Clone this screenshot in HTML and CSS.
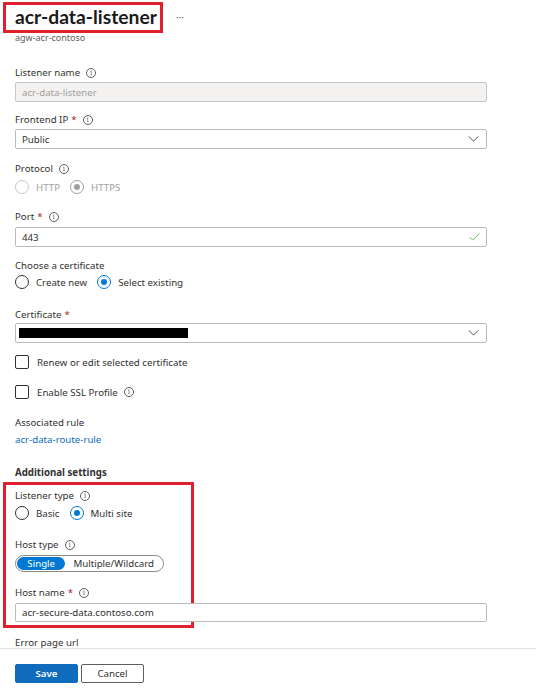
FILE: index.html
```html
<!DOCTYPE html>
<html lang="en">
<head>
<meta charset="utf-8">
<title>acr-data-listener</title>
<link rel="stylesheet" href="styles.css">
</head>
<body>
<div class="page">
  <header class="head">
    <div class="title-row">
      <h1 class="title">acr-data-listener</h1>
      <span class="more">···</span>
    </div>
    <div class="subtitle">agw-acr-contoso</div>
  </header>

  <main class="form">
    <div class="field f-listener">
      <div class="label">Listener name <span class="info">i</span></div>
      <div class="input disabled">acr-data-listener</div>
    </div>

    <div class="field f-frontend">
      <div class="label">Frontend IP <span class="req">*</span> <span class="info">i</span></div>
      <div class="input select">Public
        <svg class="chev" viewBox="0 0 12 7" width="11" height="6"><path d="M0.5 0.5 L6 6 L11.5 0.5" fill="none" stroke="#323130" stroke-width="1"/></svg>
      </div>
    </div>

    <div class="field f-protocol">
      <div class="label">Protocol <span class="info">i</span></div>
      <div class="radios">
        <span class="radio dis"><span class="circle"></span>HTTP</span>
        <span class="radio dis on"><span class="circle"></span>HTTPS</span>
      </div>
    </div>

    <div class="field f-port">
      <div class="label">Port <span class="req">*</span> <span class="info">i</span></div>
      <div class="input select">443
        <svg class="check" viewBox="0 0 12 9" width="11" height="8"><path d="M0.5 4.5 L4 8 L11.5 0.5" fill="none" stroke="#6bb35a" stroke-width="1.1"/></svg>
      </div>
    </div>

    <div class="field f-cert-choice">
      <div class="label">Choose a certificate</div>
      <div class="radios">
        <span class="radio"><span class="circle"></span>Create new</span>
        <span class="radio on"><span class="circle"></span>Select existing</span>
      </div>
    </div>

    <div class="field f-cert">
      <div class="label">Certificate <span class="req">*</span></div>
      <div class="input select"><span class="redact"></span>
        <svg class="chev" viewBox="0 0 12 7" width="11" height="6"><path d="M0.5 0.5 L6 6 L11.5 0.5" fill="none" stroke="#323130" stroke-width="1"/></svg>
      </div>
    </div>

    <div class="checkrow c-renew"><span class="box"></span>Renew or edit selected certificate</div>
    <div class="checkrow c-ssl"><span class="box"></span>Enable SSL Profile <span class="info">i</span></div>

    <div class="field f-rule">
      <div class="label">Associated rule</div>
      <a class="link" href="#">acr-data-route-rule</a>
    </div>

    <h2 class="section">Additional settings</h2>

    <div class="highlight">
      <div class="field f-ltype">
        <div class="label">Listener type <span class="info">i</span></div>
        <div class="radios">
          <span class="radio"><span class="circle"></span>Basic</span>
          <span class="radio on"><span class="circle"></span>Multi site</span>
        </div>
      </div>

      <div class="field f-htype">
        <div class="label">Host type <span class="info">i</span></div>
        <div class="toggle">
          <span class="opt active">Single</span>
          <span class="opt">Multiple/Wildcard</span>
        </div>
      </div>

      <div class="field f-hname">
        <div class="label">Host name <span class="req">*</span> <span class="info">i</span></div>
        <div class="input wide">acr-secure-data.contoso.com</div>
      </div>
    </div>

    <div class="label err">Error page url</div>
  </main>

  <footer class="footer">
    <button class="btn primary">Save</button>
    <button class="btn">Cancel</button>
  </footer>
</div>
</body>
</html>
```

FILE: styles.css
```css
* { box-sizing: border-box; }
html, body { margin: 0; padding: 0; background: #fff; }
body {
  font-family: "Noto Sans", "Open Sans", sans-serif;
  color: #323130;
  font-size: 9.7px;
  width: 536px;
  height: 700px;
  overflow: hidden;
}
.page { display: flex; flex-direction: column; }

.head { padding: 2px 0 0 3px; }
.title-row { display: flex; align-items: center; }
.title {
  margin: 0;
  width: 160px;
  height: 31px;
  border: 3px solid #e0202e;
  padding: 0 0 0 9px;
  font-family: "Lato", "Noto Sans", sans-serif;
  font-size: 19.3px;
  font-weight: 700;
  line-height: 24px;
  color: #1b1a19;
  white-space: nowrap;
}
.more { margin-left: 13px; color: #605e5c; font-size: 10px; margin-top: -2px; }
.subtitle { margin: -1px 0 0 12px; font-size: 9px; line-height: 12px; color: #605e5c; }

.form { padding-left: 15px; display: flex; flex-direction: column; }
.label { line-height: 16px; height: 16px; display: flex; align-items: center; white-space: nowrap; }
.req { color: #a4262c; margin-left: 3px; }
.info {
  display: inline-flex; align-items: center; justify-content: center;
  width: 10px; height: 10px; border: 1px solid #605e5c; border-radius: 50%;
  font-size: 7px; line-height: 1; color: #605e5c; margin-left: 6px;
  font-family: "DejaVu Serif", serif;
}
.input {
  width: 472px; height: 20px; border: 1px solid #bdbbb9; border-radius: 2px;
  padding-left: 6px; display: flex; align-items: center; position: relative;
  background: #fff;
}
.input.disabled { background: #f3f2f1; color: #a19f9d; border-color: #c8c6c4; }
.chev { position: absolute; right: 7px; top: 6px; }
.check { position: absolute; right: 6px; top: 5px; }
.redact { display: block; width: 169px; height: 10px; background: #000; margin-left: -3px; }

.f-listener { margin-top: 21px; }
.f-listener .input { margin-top: 1px; }
.f-frontend { margin-top: 10px; }
.f-frontend .input { margin-top: 1px; }
.f-protocol { margin-top: 12px; }
.f-port { margin-top: 14px; }
.f-port .input { margin-top: 2px; }
.f-cert-choice { margin-top: 11px; }
.f-cert-choice .radios { margin-top: 0; }
.f-cert { margin-top: 17px; }
.f-cert .input { margin-top: 0; }

.radios { display: flex; gap: 10px; height: 16px; margin-top: 2px; align-items: center; }
.radio { display: flex; align-items: center; }
.circle {
  width: 14px; height: 14px; border-radius: 50%; border: 1px solid #323130;
  margin-right: 7px; position: relative; background: #fff;
}
.radio.on .circle { border-color: #0078d4; }
.radio.on .circle::after {
  content: ""; position: absolute; left: 3px; top: 3px; width: 6px; height: 6px;
  border-radius: 50%; background: #0078d4;
}
.radio.dis { color: #a19f9d; }
.radio.dis .circle { border-color: #c8c6c4; }
.radio.dis.on .circle { border-color: #a19f9d; }
.radio.dis.on .circle::after { background: #a19f9d; }

.checkrow { display: flex; align-items: center; height: 16px; }
.box { width: 14px; height: 14px; border: 1px solid #323130; border-radius: 2px; margin-right: 8px; }
.c-renew { margin-top: 11px; }
.c-ssl { margin-top: 14px; }

.f-rule { margin-top: 15px; }
.link { color: #0f6cbd; text-decoration: none; line-height: 17px; display: block; }

.section { margin: 17px 0 0; font-size: 9.7px; font-weight: 700; line-height: 16px; color: #323130; }

.highlight {
  margin: 1px 0 0 -12px; width: 191px; border: 3px solid #e0202e;
  padding: 3px 0 3px 9px;
}
.f-ltype .radios { margin-top: 1px; }
.f-htype { margin-top: 16px; }
.toggle {
  margin-top: 2px; width: 149px; height: 17px; border: 1px solid #8a8886; border-radius: 9px;
  display: flex; align-items: center; padding: 0 1px;
}
.opt { line-height: 13px; padding: 0 8px; white-space: nowrap; }
.opt.active { background: #0078d4; color: #fff; border-radius: 7px; width: 49px; text-align: center; padding: 0; }
.f-hname { margin-top: 13px; }
.f-hname .input { margin-top: 2px; width: 472px; height: 19px; }

.err { margin-top: 7px; height: 13px; line-height: 16px; align-items: flex-start; }

.footer {
  border-top: 1px solid #e1dfdd; padding: 15px 0 0 15px;
  display: flex; gap: 3px;
}
.btn {
  width: 63px; height: 19px; border: 1px solid #605e5c; border-radius: 2px;
  background: #fff; color: #323130; font-family: inherit; font-size: 9.7px;
  padding: 0; line-height: 17px;
}
.btn.primary { background: #0f6cbd; border-color: #0f6cbd; color: #fff; font-weight: 600; }
```
